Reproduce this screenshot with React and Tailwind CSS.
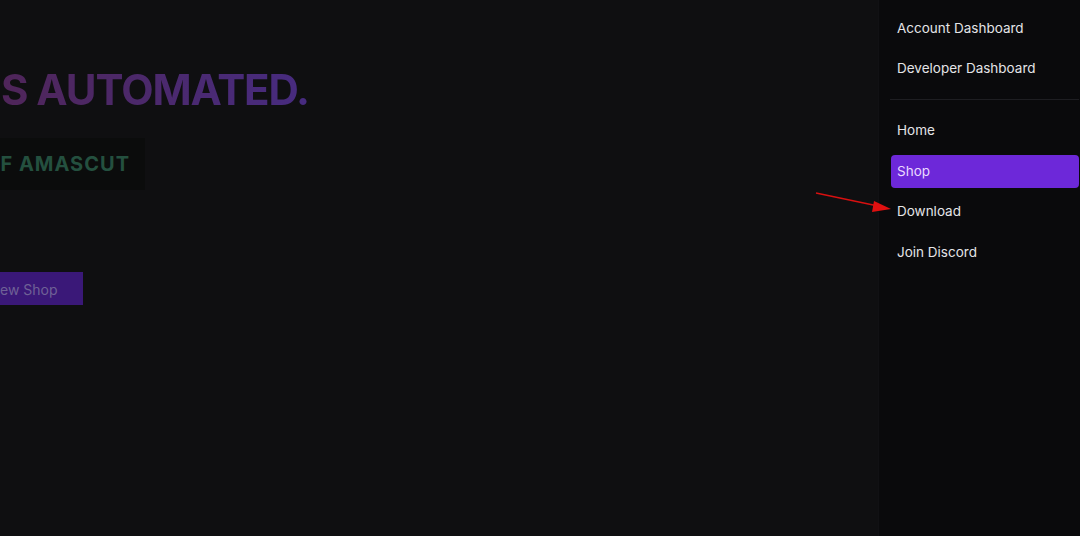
import React from 'react';

const navTop = ['Account Dashboard', 'Developer Dashboard'];
const navMain = [
  { label: 'Home' },
  { label: 'Shop', active: true },
  { label: 'Download' },
  { label: 'Join Discord' },
];

const NavItem = ({ label, active }) => (
  <a
    className={`flex items-center h-[33px] px-[6px] rounded-[4px] text-[13.5px] ${
      active ? 'bg-[#6d28d9] text-[#ead9ff]' : 'text-[#e4e4e7]'
    }`}
  >
    {label}
  </a>
);

export default function App() {
  return (
    <div
      className="relative flex h-[536px] w-[1080px] overflow-hidden bg-[#0f0f11]"
      style={{ fontFamily: 'Inter, "Noto Sans", sans-serif' }}
    >
      {/* dimmed page behind the menu */}
      <main className="flex-1 overflow-hidden pt-[69px]">
        <h1 className="text-[42px] leading-none font-bold tracking-tight pl-[1px] bg-gradient-to-r from-[#4f2559] to-[#472b80] bg-clip-text text-transparent w-fit">
          S AUTOMATED.
        </h1>
        <div className="mt-[27px] w-[145px] h-[52px] flex items-center justify-end pr-[15px] bg-[#0b0c0c]">
          <span className="text-[20px] font-bold tracking-wider text-[#24503f]">F AMASCUT</span>
        </div>
        <button className="mt-[82px] h-[33px] w-[83px] flex items-center pt-[2px] bg-[#3a1878] text-[14px] text-[#6f6196]">
          <span>ew Shop</span>
        </button>
      </main>

      {/* side menu */}
      <aside className="w-[202px] h-full bg-[#0a0a0c] border-l border-[#111114] pl-[12px] pr-[1px] pt-[12px]">
        <nav className="flex flex-col gap-[7px]">
          {navTop.map((l) => (
            <NavItem key={l} label={l} />
          ))}
        </nav>
        <div className="my-[14px] -ml-px h-px bg-[#1e1e22]" />
        <nav className="flex flex-col gap-[7.5px]">
          {navMain.map((i) => (
            <NavItem key={i.label} {...i} />
          ))}
        </nav>
      </aside>

      {/* annotation arrow */}
      <svg className="absolute left-0 top-0 pointer-events-none" width="1080" height="536">
        <line x1="816" y1="193" x2="878" y2="206" stroke="#d81010" strokeWidth="1.3" />
        <polygon points="891,209 874,201 872,212" fill="#e01010" />
      </svg>
    </div>
  );
}
